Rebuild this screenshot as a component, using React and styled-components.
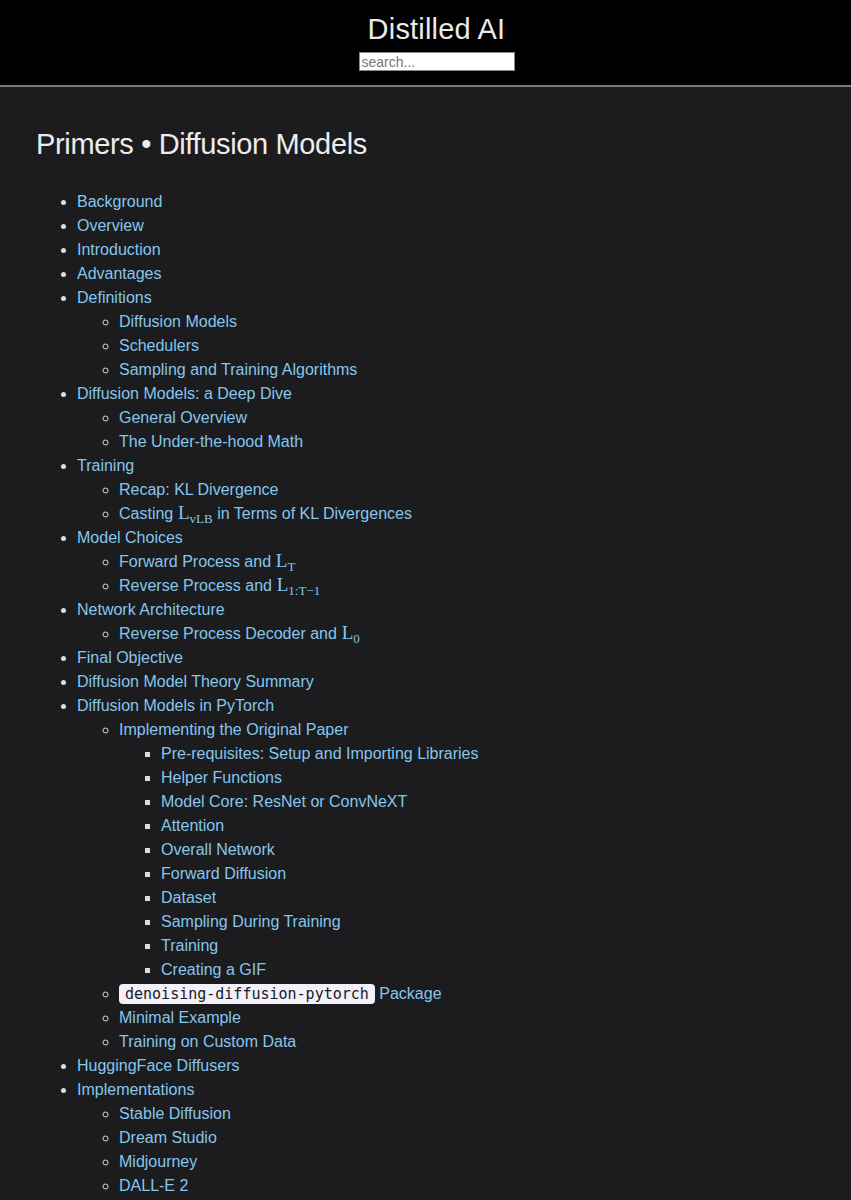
import styled, { createGlobalStyle } from 'styled-components';

const GlobalStyle = createGlobalStyle`
  body {
    margin: 0;
    background: #1c1c1e;
    font-family: 'Liberation Sans', Arial, sans-serif;
  }
`;

const toc = [
  { t: 'Background' },
  { t: 'Overview' },
  { t: 'Introduction' },
  { t: 'Advantages' },
  {
    t: 'Definitions',
    c: [{ t: 'Diffusion Models' }, { t: 'Schedulers' }, { t: 'Sampling and Training Algorithms' }],
  },
  {
    t: 'Diffusion Models: a Deep Dive',
    c: [{ t: 'General Overview' }, { t: 'The Under-the-hood Math' }],
  },
  {
    t: 'Training',
    c: [
      { t: 'Recap: KL Divergence' },
      { t: 'Casting', math: 'vLB', after: ' in Terms of KL Divergences' },
    ],
  },
  {
    t: 'Model Choices',
    c: [
      { t: 'Forward Process and', math: 'T' },
      { t: 'Reverse Process and', math: '1:T−1' },
    ],
  },
  {
    t: 'Network Architecture',
    c: [{ t: 'Reverse Process Decoder and', math: '0' }],
  },
  { t: 'Final Objective' },
  { t: 'Diffusion Model Theory Summary' },
  {
    t: 'Diffusion Models in PyTorch',
    c: [
      {
        t: 'Implementing the Original Paper',
        c: [
          { t: 'Pre-requisites: Setup and Importing Libraries' },
          { t: 'Helper Functions' },
          { t: 'Model Core: ResNet or ConvNeXT' },
          { t: 'Attention' },
          { t: 'Overall Network' },
          { t: 'Forward Diffusion' },
          { t: 'Dataset' },
          { t: 'Sampling During Training' },
          { t: 'Training' },
          { t: 'Creating a GIF' },
        ],
      },
      { code: 'denoising-diffusion-pytorch', t: ' Package' },
      { t: 'Minimal Example' },
      { t: 'Training on Custom Data' },
    ],
  },
  { t: 'HuggingFace Diffusers' },
  {
    t: 'Implementations',
    c: [{ t: 'Stable Diffusion' }, { t: 'Dream Studio' }, { t: 'Midjourney' }, { t: 'DALL-E 2' }],
  },
];

function Item({ item, level }) {
  return (
    <Li>
      <Link href="#">
        {item.code && <Code>{item.code}</Code>}
        {item.t}
        {item.math && (
          <Math>
            {' '}L<sub>{item.math}</sub>
          </Math>
        )}
        {item.after}
      </Link>
      {item.c && <List level={level + 1} items={item.c} />}
    </Li>
  );
}

function List({ items, level }) {
  return (
    <Ul level={level}>
      {items.map((it, i) => (
        <Item key={i} item={it} level={level} />
      ))}
    </Ul>
  );
}

export default function App() {
  return (
    <>
      <GlobalStyle />
      <Header>
        <SiteTitle>Distilled AI</SiteTitle>
        <Search placeholder="search..." />
      </Header>
      <Main>
        <PageTitle>Primers • Diffusion Models</PageTitle>
        <List items={toc} level={0} />
      </Main>
    </>
  );
}

const Header = styled.header`
  background: #000;
  height: 87px;
  border-bottom: 2px solid #7a7a7a;
  display: flex;
  flex-direction: column;
  align-items: center;
  box-sizing: border-box;
  padding: 11px 0 0 22px;
`;

const SiteTitle = styled.div`
  color: #eaeaea;
  font-size: 29px;
  line-height: 36px;
  letter-spacing: 0.2px;
`;

const Search = styled.input`
  margin-top: 5px;
  width: 156px;
  height: 19px;
  box-sizing: border-box;
  border: 1px solid #888;
  padding: 0 2px;
  font-family: 'Liberation Sans', Arial, sans-serif;
  font-size: 14px;
  outline: none;
  &::placeholder {
    color: #777;
  }
`;

const Main = styled.main`
  padding: 38px 36px 0;
`;

const PageTitle = styled.h1`
  margin: 0 0 27px;
  color: #ececec;
  font-size: 29px;
  font-weight: 400;
  line-height: 38px;
  letter-spacing: -0.35px;
`;

const Ul = styled.ul`
  margin: 0;
  padding-left: ${(p) => (p.level === 0 ? '41px' : '42px')};
  list-style-type: ${(p) => ['disc', 'circle', 'square'][p.level]};
  color: #dcdcdc;
`;

const Li = styled.li`
  font-size: 16px;
  line-height: 24px;
`;

const Link = styled.a`
  color: #85c6ec;
  text-decoration: none;
`;

const Math = styled.span`
  font-family: 'Liberation Serif', 'Times New Roman', serif;
  font-size: 19px;
  line-height: 16px;
  sub {
    font-size: 13px;
    line-height: 0;
    vertical-align: -4px;
  }
`;

const Code = styled.code`
  font-family: 'DejaVu Sans Mono', monospace;
  font-size: 15px;
  color: #1a1a1a;
  background: #f2f0f8;
  border-radius: 4px;
  padding: 1px 6px;
`;
